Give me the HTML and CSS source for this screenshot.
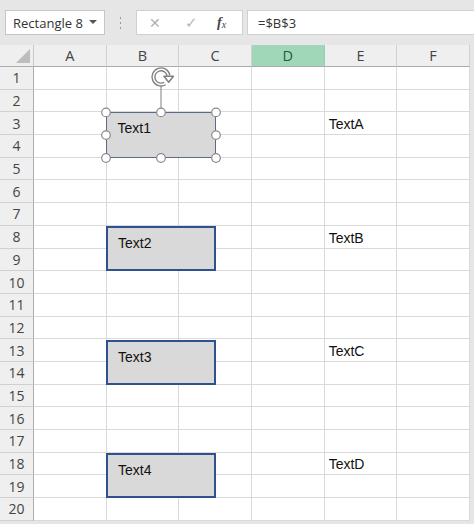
FILE: index.html
```html
<!DOCTYPE html>
<html>
<head>
<meta charset="utf-8">
<link rel="stylesheet" href="styles.css">
</head>
<body>
<div class="app">
  <div class="fbar">
    <div class="namebox"><span>Rectangle 8</span><span class="caret"></span></div>
    <div class="grip"><i></i><i></i><i></i></div>
    <div class="fbtns">
      <span class="fx-x">✕</span>
      <span class="fx-ok">✓</span>
      <span class="fx-f"><i>f</i><sub>x</sub></span>
    </div>
    <div class="finput">=$B$3</div>
  </div>
  <div class="sheet">
    <div class="corner"><span class="tri"></span></div>
    <div class="ch">A</div><div class="ch">B</div><div class="ch">C</div><div class="ch sel">D</div><div class="ch">E</div><div class="ch">F</div>

    <div class="rh">1</div><div class="c"></div><div class="c"></div><div class="c"></div><div class="c"></div><div class="c"></div><div class="c"></div>
    <div class="rh">2</div><div class="c"></div><div class="c"></div><div class="c"></div><div class="c"></div><div class="c"></div><div class="c"></div>
    <div class="rh">3</div><div class="c"></div><div class="c"></div><div class="c"></div><div class="c"></div><div class="c">TextA</div><div class="c"></div>
    <div class="rh">4</div><div class="c"></div><div class="c"></div><div class="c"></div><div class="c"></div><div class="c"></div><div class="c"></div>
    <div class="rh">5</div><div class="c"></div><div class="c"></div><div class="c"></div><div class="c"></div><div class="c"></div><div class="c"></div>
    <div class="rh">6</div><div class="c"></div><div class="c"></div><div class="c"></div><div class="c"></div><div class="c"></div><div class="c"></div>
    <div class="rh">7</div><div class="c"></div><div class="c"></div><div class="c"></div><div class="c"></div><div class="c"></div><div class="c"></div>
    <div class="rh">8</div><div class="c"></div><div class="c"></div><div class="c"></div><div class="c"></div><div class="c">TextB</div><div class="c"></div>
    <div class="rh">9</div><div class="c"></div><div class="c"></div><div class="c"></div><div class="c"></div><div class="c"></div><div class="c"></div>
    <div class="rh">10</div><div class="c"></div><div class="c"></div><div class="c"></div><div class="c"></div><div class="c"></div><div class="c"></div>
    <div class="rh">11</div><div class="c"></div><div class="c"></div><div class="c"></div><div class="c"></div><div class="c"></div><div class="c"></div>
    <div class="rh">12</div><div class="c"></div><div class="c"></div><div class="c"></div><div class="c"></div><div class="c"></div><div class="c"></div>
    <div class="rh">13</div><div class="c"></div><div class="c"></div><div class="c"></div><div class="c"></div><div class="c">TextC</div><div class="c"></div>
    <div class="rh">14</div><div class="c"></div><div class="c"></div><div class="c"></div><div class="c"></div><div class="c"></div><div class="c"></div>
    <div class="rh">15</div><div class="c"></div><div class="c"></div><div class="c"></div><div class="c"></div><div class="c"></div><div class="c"></div>
    <div class="rh">16</div><div class="c"></div><div class="c"></div><div class="c"></div><div class="c"></div><div class="c"></div><div class="c"></div>
    <div class="rh">17</div><div class="c"></div><div class="c"></div><div class="c"></div><div class="c"></div><div class="c"></div><div class="c"></div>
    <div class="rh">18</div><div class="c"></div><div class="c"></div><div class="c"></div><div class="c"></div><div class="c">TextD</div><div class="c"></div>
    <div class="rh">19</div><div class="c"></div><div class="c"></div><div class="c"></div><div class="c"></div><div class="c"></div><div class="c"></div>
    <div class="rh">20</div><div class="c"></div><div class="c"></div><div class="c"></div><div class="c"></div><div class="c"></div><div class="c"></div>

    <div class="shape s1">Text1</div>
    <div class="shape s2">Text2</div>
    <div class="shape s3">Text3</div>
    <div class="shape s4">Text4</div>

    <svg class="selection" width="130" height="100" viewBox="0 0 130 100">
      <line x1="65" y1="36" x2="65" y2="62" stroke="#808080" stroke-width="1"/>
      <g fill="none" stroke-linecap="butt">
        <path d="M68.9 33.5 A7.6 7.6 0 1 1 72.5 25.5" stroke="#808080" stroke-width="4.2"/>
        <path d="M68.9 33.5 A7.6 7.6 0 1 1 72.5 25.5" stroke="#fff" stroke-width="1.5"/>
      </g>
      <path d="M68 26.3 L77.4 26.3 L72.7 32.3 Z" fill="#fff" stroke="#808080" stroke-width="1.5" stroke-linejoin="round"/>
      <g fill="#fff" stroke="#8a8a8a" stroke-width="1.2">
        <circle cx="10" cy="62.4" r="4.3"/>
        <circle cx="65" cy="62.4" r="4.3"/>
        <circle cx="120" cy="62.4" r="4.3"/>
        <circle cx="10" cy="85.1" r="4.3"/>
        <circle cx="120" cy="85.1" r="4.3"/>
      </g>
    </svg>
    <svg class="selection2" width="130" height="12" viewBox="0 0 130 12">
      <g fill="#fff" stroke="#8a8a8a" stroke-width="1.2">
        <circle cx="10" cy="6" r="4.3"/>
        <circle cx="65" cy="6" r="4.3"/>
        <circle cx="120" cy="6" r="4.3"/>
      </g>
    </svg>
  </div>
</div>
</body>
</html>
```
FILE: styles.css
```css
html, body {
  margin: 0;
  padding: 0;
}
body {
  background: #e6e6e6;
  font-family: "Liberation Sans", Arial, sans-serif;
  width: 474px;
  height: 524px;
  overflow: hidden;
}
.app {
  display: flex;
  flex-direction: column;
}
.fbar {
  height: 45px;
  box-sizing: border-box;
  padding-top: 10px;
  padding-left: 5px;
  display: flex;
  align-items: flex-start;
  background: #e6e6e6;
}
.namebox {
  width: 100px;
  height: 25px;
  box-sizing: border-box;
  background: #fff;
  border: 1px solid #c6c6c6;
  display: flex;
  align-items: center;
  justify-content: space-between;
  padding: 0 7px 0 7px;
  font-family: "Open Sans", "Liberation Sans", sans-serif;
  font-size: 13px;
  color: #333;
}
.caret {
  width: 0;
  height: 0;
  border-left: 4px solid transparent;
  border-right: 4px solid transparent;
  border-top: 4px solid #555;
  margin-top: -2px;
}
.grip {
  width: 31px;
  height: 25px;
  display: flex;
  flex-direction: column;
  align-items: center;
  justify-content: center;
  gap: 3px;
}
.grip i {
  display: block;
  width: 1px;
  height: 2px;
  background: #999;
}
.fbtns {
  width: 107px;
  height: 25px;
  box-sizing: border-box;
  background: #fff;
  border: 1px solid #d0d0d0;
  display: flex;
  align-items: center;
  padding-left: 12px;
  color: #b0b0b0;
}
.fx-x {
  font-size: 14px;
  width: 36px;
}
.fx-ok {
  font-size: 15px;
  width: 32px;
  color: #b6b6b6;
}
.fx-f {
  font-family: "Liberation Serif", serif;
  font-size: 14px;
  color: #444;
}
.fx-f i {
  font-style: italic;
  font-weight: bold;
}
.fx-f sub {
  font-style: italic;
  font-size: 10px;
  vertical-align: baseline;
  position: relative;
  top: 1px;
}
.finput {
  flex: 1;
  margin-left: 4px;
  height: 25px;
  box-sizing: border-box;
  background: #fff;
  border: 1px solid #d0d0d0;
  border-right: none;
  padding-left: 10px;
  display: flex;
  align-items: center;
  font-family: "Open Sans", "Liberation Sans", sans-serif;
  font-size: 13px;
  color: #333;
}
.sheet {
  position: relative;
  display: grid;
  grid-template-columns: 34px repeat(6, 72.67px);
  grid-template-rows: 22px repeat(20, 22.7px);
  width: 470px;
  background: #fff;
}
.corner {
  background: #efefef;
  border-right: 1px solid #c8c8c8;
  border-bottom: 1px solid #ababab;
  box-sizing: border-box;
  position: relative;
}
.tri {
  position: absolute;
  right: 3px;
  bottom: 3px;
  width: 0;
  height: 0;
  border-left: 14px solid transparent;
  border-bottom: 14px solid #bdbdbd;
}
.ch {
  background: #efefef;
  border-right: 1px solid #d0d0d0;
  border-bottom: 1px solid #ababab;
  box-sizing: border-box;
  display: flex;
  align-items: center;
  justify-content: center;
  font-family: "Open Sans", "Liberation Sans", sans-serif;
  font-size: 14.5px;
  color: #444;
}
.ch.sel {
  background: #a0d7b9;
  color: #1e5c3a;
  border-right-color: #9cc9b0;
}
.rh {
  background: #efefef;
  border-right: 1px solid #ababab;
  border-bottom: 1px solid #d0d0d0;
  box-sizing: border-box;
  display: flex;
  align-items: center;
  justify-content: center;
  font-family: "Open Sans", "Liberation Sans", sans-serif;
  font-size: 14px;
  color: #444;
}
.c {
  border-right: 1px solid #dadada;
  border-bottom: 1px solid #dadada;
  box-sizing: border-box;
  font-size: 14px;
  color: #111;
  padding-left: 4px;
  display: flex;
  align-items: flex-end;
  padding-bottom: 2px;
  line-height: 16px;
}
.shape {
  position: absolute;
  left: 106px;
  width: 110px;
  height: 45.4px;
  box-sizing: border-box;
  background: #d9d9d9;
  border: 2px solid #2f528f;
  font-size: 14px;
  color: #111;
  padding: 7px 0 0 10px;
  line-height: 16px;
}
.s1 { top: 67.4px; border: 1.5px solid #5b6a86; padding: 7px 0 0 10.5px; }
.s2 { top: 181px; }
.s3 { top: 294.5px; }
.s4 { top: 408px; }
.selection {
  position: absolute;
  left: 96px;
  top: 5px;
  overflow: visible;
}
.selection2 {
  position: absolute;
  left: 96px;
  top: 106.8px;
  overflow: visible;
}
```
